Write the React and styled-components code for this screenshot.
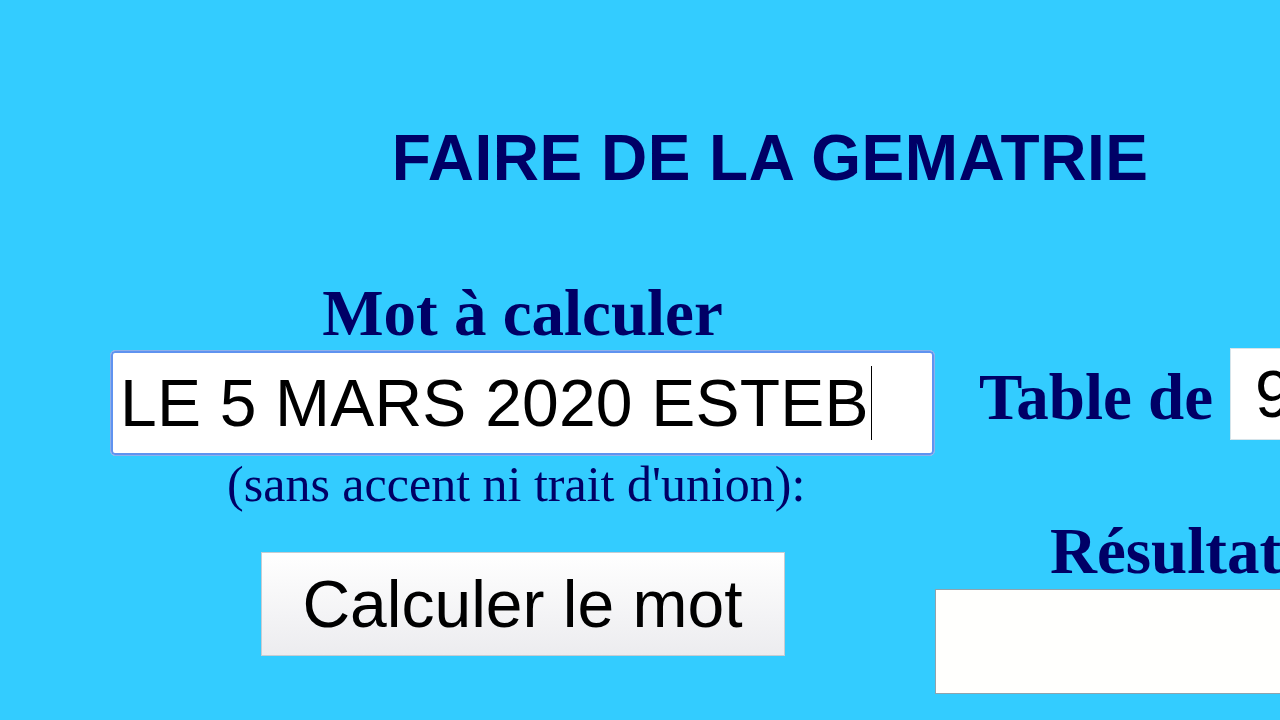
import React from "react";
import styled, { createGlobalStyle } from "styled-components";

const Global = createGlobalStyle`
  html, body {
    margin: 0;
    padding: 0;
    background: #33ccff;
    overflow: hidden;
  }
  body {
    width: 1280px;
    height: 720px;
  }
`;

const Page = styled.div`
  width: 1540px;
  padding-top: 126px;
  display: flex;
  flex-direction: column;
`;

const Title = styled.h1`
  margin: 0;
  text-align: center;
  font-family: "Liberation Sans", Arial, sans-serif;
  font-weight: bold;
  font-size: 64px;
  line-height: 64px;
  letter-spacing: 0.5px;
  color: #000066;
`;

const Content = styled.div`
  display: grid;
  grid-template-columns: 825px 461px;
  margin-left: 110px;
  margin-top: 91px;
  align-items: start;
`;

const Column = styled.div`
  display: flex;
  flex-direction: column;
  align-items: center;
`;

const RightColumn = styled(Column)`
  padding-top: 67px;
`;

const Label = styled.div`
  font-family: "Liberation Serif", "Times New Roman", serif;
  font-weight: bold;
  font-size: 65px;
  line-height: 65px;
  color: #000066;
  white-space: nowrap;
`;

const Hint = styled.div`
  font-family: "Liberation Serif", "Times New Roman", serif;
  font-size: 50px;
  line-height: 50px;
  color: #000066;
  margin-top: 3px;
  white-space: nowrap;
`;

const WordInput = styled.div`
  box-sizing: border-box;
  width: 825px;
  height: 106px;
  margin-top: 4px;
  background: #ffffff;
  border: 1px solid #8fb0ea;
  border-radius: 5px;
  box-shadow: inset 0 0 0 2px #5f93f0;
  padding: 0 0 0 9px;
  display: flex;
  align-items: center;
  font-family: "Liberation Sans", Arial, sans-serif;
  font-size: 66px;
  letter-spacing: 0.2px;
  color: #000;
  white-space: nowrap;
  overflow: hidden;
`;

const Caret = styled.span`
  display: inline-block;
  width: 1.5px;
  height: 74px;
  margin-left: 2px;
  background: #000;
`;

const Button = styled.button`
  box-sizing: border-box;
  width: 524px;
  height: 104px;
  margin-top: 43px;
  border: 1px solid #c6ccd2;
  border-radius: 0;
  background: linear-gradient(#ffffff, #ececef);
  font-family: "Liberation Sans", Arial, sans-serif;
  font-size: 66px;
  color: #000;
  padding: 0;
  cursor: pointer;
`;

const TableRow = styled.div`
  display: flex;
  align-items: center;
  gap: 17px;
`;

const TableLabel = styled(Label)`
  position: relative;
  top: 3px;
`;

const SmallInput = styled.div`
  box-sizing: border-box;
  width: 122px;
  height: 92px;
  background: #fff;
  border: 1px solid #d6e4ea;
  padding-left: 24px;
  display: flex;
  align-items: center;
  font-family: "Liberation Sans", Arial, sans-serif;
  font-size: 66px;
  color: #000;
`;

const ResultLabel = styled(Label)`
  margin-top: 79px;
`;

const ResultBox = styled.div`
  box-sizing: border-box;
  width: 461px;
  height: 105px;
  margin-top: 5px;
  background: #fffffd;
  border: 1px solid #8fa3ad;
`;

export default function App() {
  return (
    <>
      <Global />
      <Page>
        <Title>FAIRE DE LA GEMATRIE</Title>
        <Content>
          <Column>
            <Label>Mot à calculer</Label>
            <WordInput>
              LE 5 MARS 2020 ESTEB
              <Caret />
            </WordInput>
            <Hint>(sans accent ni trait d'union):{"\u00a0"}</Hint>
            <Button>Calculer le mot</Button>
          </Column>
          <RightColumn>
            <TableRow>
              <TableLabel>Table de</TableLabel>
              <SmallInput>9</SmallInput>
            </TableRow>
            <ResultLabel>Résultat</ResultLabel>
            <ResultBox />
          </RightColumn>
        </Content>
      </Page>
    </>
  );
}
